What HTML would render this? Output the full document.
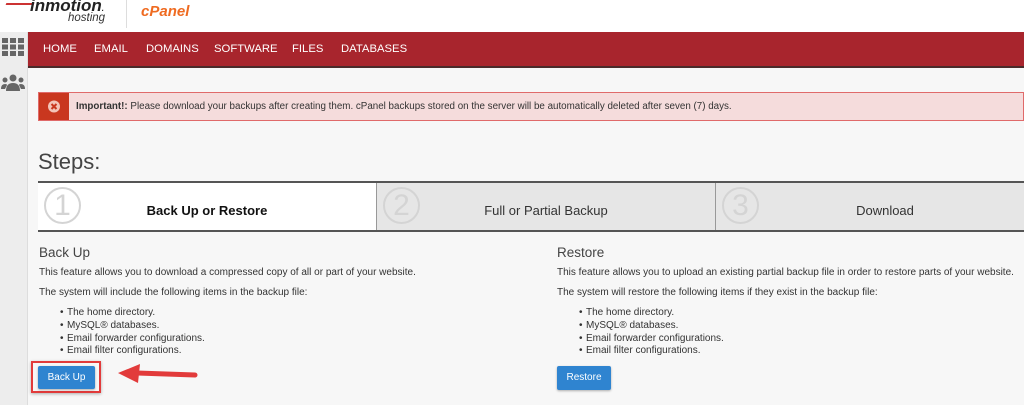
<!DOCTYPE html>
<html><head><meta charset="utf-8"><style>
*{margin:0;padding:0;box-sizing:border-box}
body{width:1024px;height:405px;overflow:hidden;background:#f7f7f7;font-family:"Liberation Sans",sans-serif;color:#333;position:relative}
.hdr{position:absolute;left:0;top:0;width:1024px;height:32px;background:#fff}
.side{position:absolute;left:0;top:32px;width:28px;height:373px;background:#ededed;border-right:1px solid #ddd}
.nav{position:absolute;left:28px;top:32px;width:996px;height:36px;background:#a8252d;border-bottom:2px solid #4a2a2a}
.nav span{position:absolute;top:11px;color:#fff;font-size:11.3px}
.alert{position:absolute;left:38px;top:92px;width:986px;height:29px;background:#f5dcdc;border:1px solid #e06a6a}
.alert .ic{position:absolute;left:0;top:0;width:30px;height:27px;background:#c9371f}
.alert .t{position:absolute;left:37px;top:8px;font-size:9.8px;color:#333}
h1{position:absolute;left:38px;top:149px;font-size:22px;font-weight:normal;color:#444}
.steps{position:absolute;left:38px;top:181px;width:986px;height:51px;border-top:2px solid #555;border-bottom:2px solid #555;background:#e6e6e6}
.st{position:absolute;top:0;height:47px;font-size:13px}
.st .n{position:absolute;left:6px;top:4px;width:37px;height:37px;border:2px solid #d4d4d4;border-radius:50%;color:#d4d4d4;font-size:30px;text-align:center;line-height:34px}
.st .l{position:absolute;top:20px;width:100%;text-align:center}
h2{position:absolute;font-size:13.5px;font-weight:normal;color:#444}
p{position:absolute;font-size:10px;color:#333;white-space:nowrap}
ul{position:absolute;font-size:10px;color:#333;list-style:none;line-height:12.8px}
ul li:before{content:"•";position:absolute;margin-left:-7px}
.btn{position:absolute;background:#2f84d0;color:#fff;font-size:10px;text-align:center;border-radius:2px;box-shadow:0 1px 2px rgba(0,0,0,.3)}
</style></head><body>
<div class="hdr">
<div style="position:absolute;left:6px;top:3px;width:28px;height:2px;background:#c33;transform:skewX(-20deg)"></div>
<div style="position:absolute;left:30px;top:-4px;font-size:17px;font-weight:bold;font-style:italic;color:#222">inmotion<span style="font-size:8px">.</span></div>
<div style="position:absolute;left:68px;top:12px;font-size:11.5px;font-style:italic;color:#333">hosting</div>
<div style="position:absolute;left:126px;top:0;width:1px;height:28px;background:#ddd"></div>
<div style="position:absolute;left:141px;top:3px;font-size:15px;font-weight:bold;font-style:italic;color:#ef6b21">cPanel</div>
</div>
<div class="side">
<svg style="position:absolute;left:2px;top:6px" width="22" height="18" viewBox="0 0 22 18" fill="#666"><rect x="0" y="0" width="6" height="5"/><rect x="8" y="0" width="6" height="5"/><rect x="16" y="0" width="6" height="5"/><rect x="0" y="6.5" width="6" height="5"/><rect x="8" y="6.5" width="6" height="5"/><rect x="16" y="6.5" width="6" height="5"/><rect x="0" y="13" width="6" height="5"/><rect x="8" y="13" width="6" height="5"/><rect x="16" y="13" width="6" height="5"/></svg>
<svg style="position:absolute;left:1px;top:42px" width="24" height="18" viewBox="0 0 24 18" fill="#666"><circle cx="12" cy="4" r="3.5"/><circle cx="4" cy="6" r="2.5"/><circle cx="20" cy="6" r="2.5"/><path d="M5 17 Q5 9 12 9 Q19 9 19 17Z"/><path d="M0 15 Q0 10 4 10 Q6 10 6 11 L4 15Z"/><path d="M24 15 Q24 10 20 10 Q18 10 18 11 L20 15Z"/></svg>
</div>
<div class="nav">
<span style="left:15px">HOME</span><span style="left:66px">EMAIL</span><span style="left:118px">DOMAINS</span><span style="left:186px">SOFTWARE</span><span style="left:264px">FILES</span><span style="left:313px">DATABASES</span>
</div>
<div class="alert"><div class="ic"><svg width="30" height="27"><circle cx="15" cy="13.5" r="6" fill="#f3c4b8"/><path d="M12.5 11 L17.5 16 M17.5 11 L12.5 16" stroke="#c9371f" stroke-width="2"/></svg></div>
<div class="t"><b>Important!:</b> Please download your backups after creating them. cPanel backups stored on the server will be automatically deleted after seven (7) days.</div></div>
<h1>Steps:</h1>
<div class="steps">
<div class="st" style="left:0;width:339px;background:#fff;border-right:1px solid #999"><div class="n">1</div><div class="l" style="font-weight:bold;color:#111">Back Up or Restore</div></div>
<div class="st" style="left:339px;width:339px;border-right:1px solid #999"><div class="n">2</div><div class="l">Full or Partial Backup</div></div>
<div class="st" style="left:678px;width:308px"><div class="n">3</div><div class="l" style="padding-left:30px">Download</div></div>
</div>
<h2 style="left:39px;top:245px">Back Up</h2>
<p style="left:39px;top:267px">This feature allows you to download a compressed copy of all or part of your website.</p>
<p style="left:39px;top:287px">The system will include the following items in the backup file:</p>
<ul style="left:67px;top:307px"><li>The home directory.</li><li>MySQL® databases.</li><li>Email forwarder configurations.</li><li>Email filter configurations.</li></ul>
<div style="position:absolute;left:31px;top:361px;width:70px;height:32px;border:2px solid #e23b3b;box-shadow:0 1px 3px rgba(0,0,0,.3)"></div>
<div class="btn" style="left:38px;top:366px;width:57px;height:23px;line-height:23px">Back Up</div>
<svg style="position:absolute;left:115px;top:362px" width="85" height="26"><path d="M80 13 L22 11" stroke="#e23b3b" stroke-width="5" stroke-linecap="round"/><path d="M3 11 L25 2 L23 21Z" fill="#e23b3b"/></svg>
<h2 style="left:557px;top:245px">Restore</h2>
<p style="left:557px;top:267px">This feature allows you to upload an existing partial backup file in order to restore parts of your website.</p>
<p style="left:557px;top:287px">The system will restore the following items if they exist in the backup file:</p>
<ul style="left:586px;top:307px"><li>The home directory.</li><li>MySQL® databases.</li><li>Email forwarder configurations.</li><li>Email filter configurations.</li></ul>
<div class="btn" style="left:557px;top:366px;width:54px;height:24px;line-height:24px">Restore</div>
</body></html>
